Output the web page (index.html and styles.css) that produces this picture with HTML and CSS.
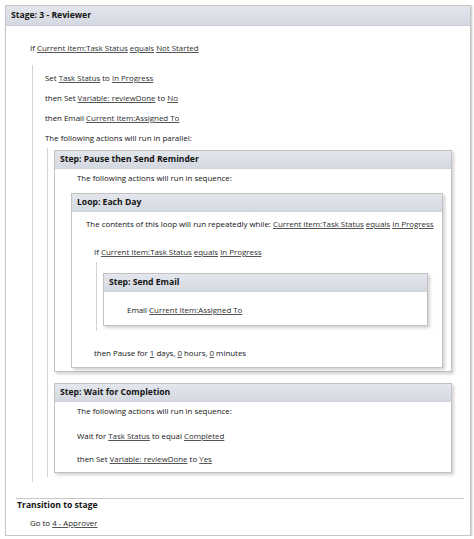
FILE: index.html
```html
<!DOCTYPE html>
<html>
<head>
<meta charset="utf-8">
<link rel="stylesheet" href="styles.css">
</head>
<body>
<div class="stage">
  <div class="stage-hd">Stage: 3 - Reviewer</div>
  <div class="stage-body">
    <div class="line cond">If <a>Current Item:Task Status</a> <a>equals</a> <a>Not Started</a></div>
    <div class="indent">
      <div class="line">Set <a>Task Status</a> to <a>In Progress</a></div>
      <div class="line">then Set <a>Variable: reviewDone</a> to <a>No</a></div>
      <div class="line">then Email <a>Current Item:Assigned To</a></div>
      <div class="line">The following actions will run in parallel:</div>
      <div class="parallel">
        <div class="box step1">
          <div class="box-hd">Step: Pause then Send Reminder</div>
          <div class="line seq">The following actions will run in sequence:</div>
          <div class="box loop">
            <div class="box-hd">Loop: Each Day</div>
            <div class="line loop-desc">The contents of this loop will run repeatedly while: <a>Current Item:Task Status</a> <a>equals</a> <a>In Progress</a></div>
            <div class="line loop-if">If <a>Current Item:Task Status</a> <a>equals</a> <a>In Progress</a></div>
            <div class="inner">
              <div class="box email">
                <div class="box-hd">Step: Send Email</div>
                <div class="line email-line">Email <a>Current Item:Assigned To</a></div>
              </div>
            </div>
            <div class="line pause">then Pause for <a>1</a> days, <a>0</a> hours, <a>0</a> minutes</div>
          </div>
        </div>
        <div class="box step2">
          <div class="box-hd">Step: Wait for Completion</div>
          <div class="line seq2">The following actions will run in sequence:</div>
          <div class="line wait">Wait for <a>Task Status</a> to equal <a>Completed</a></div>
          <div class="line setyes">then Set <a>Variable: reviewDone</a> to <a>Yes</a></div>
        </div>
      </div>
    </div>
    <div class="transition">
      <div class="trans-hd">Transition to stage</div>
      <div class="line goto">Go to <a>4 - Approver</a></div>
    </div>
  </div>
</div>
</body>
</html>
```

FILE: styles.css
```css
html, body {
  margin: 0;
  padding: 0;
  background: #ffffff;
}
body {
  font-family: "Open Sans", "Noto Sans", sans-serif;
  font-size: 7.9px;
  color: #141414;
}
a {
  color: #2e2e2e;
  text-decoration: underline;
  text-decoration-color: #555555;
  text-underline-offset: 1px;
}
.stage {
  margin: 5px 0 0 5px;
  width: 464px;
  border: 1px solid #c6c6c6;
  box-shadow: 1px 1px 2px rgba(0,0,0,0.25);
  background: #fff;
}
.stage-hd {
  height: 19px;
  line-height: 19px;
  padding-left: 5px;
  font-weight: 700;
  font-size: 8.6px;
  background: linear-gradient(#e3e6ed, #d4d8e0);
  border-bottom: 1px solid #c9ccd4;
}
.line {
  height: 20px;
  line-height: 20px;
  white-space: nowrap;
}
.cond {
  margin-top: 12px;
  padding-left: 24px;
}
.indent {
  margin-left: 26px;
  margin-top: 7px;
  border-left: 1px solid #d4d4d4;
  padding: 3px 0 5px 12px;
}
.parallel {
  margin-left: 2px;
  border-left: 1px solid #d4d4d4;
  padding: 2px 18px 4px 6px;
}
.box {
  border: 1px solid #c2c2c2;
  background: #fff;
  box-shadow: 2px 2px 3px rgba(0,0,0,0.18);
}
.box-hd {
  height: 17px;
  line-height: 17px;
  padding-left: 5px;
  font-weight: 700;
  font-size: 8.6px;
  background: linear-gradient(#e3e6ed, #d4d8e0);
  border-bottom: 1px solid #cfd3db;
}
.seq {
  height: 18px;
  line-height: 18px;
  padding-left: 22px;
}
.loop {
  margin: 6px 8px 3px 16px;
  padding-bottom: 4px;
}
.loop-desc {
  margin-top: 2px;
  padding-left: 14px;
}
.loop-if {
  margin-top: 8px;
  padding-left: 22px;
}
.inner {
  margin: 0 14px 0 24px;
  border-left: 1px solid #d4d4d4;
  padding: 11px 0 5px 6px;
}
.email {
  padding-bottom: 5px;
}
.email-line {
  margin-top: 8px;
  padding-left: 23px;
}
.pause {
  margin-top: 12px;
  padding-left: 22px;
}
.step2 {
  margin-top: 11px;
  padding-bottom: 3px;
}
.seq2 {
  height: 18px;
  line-height: 18px;
  padding-left: 22px;
}
.wait {
  margin-top: 6px;
  padding-left: 22px;
}
.setyes {
  margin-top: 3px;
  padding-left: 22px;
}
.transition {
  margin: 16px 6px 0 10px;
  border-top: 1px solid #c8c8c8;
  padding-bottom: 2px;
}
.trans-hd {
  height: 12px;
  line-height: 12px;
  padding-left: 1px;
  font-weight: 700;
  font-size: 8.6px;
}
.goto {
  margin-top: 2px;
  padding-left: 14px;
}
```
